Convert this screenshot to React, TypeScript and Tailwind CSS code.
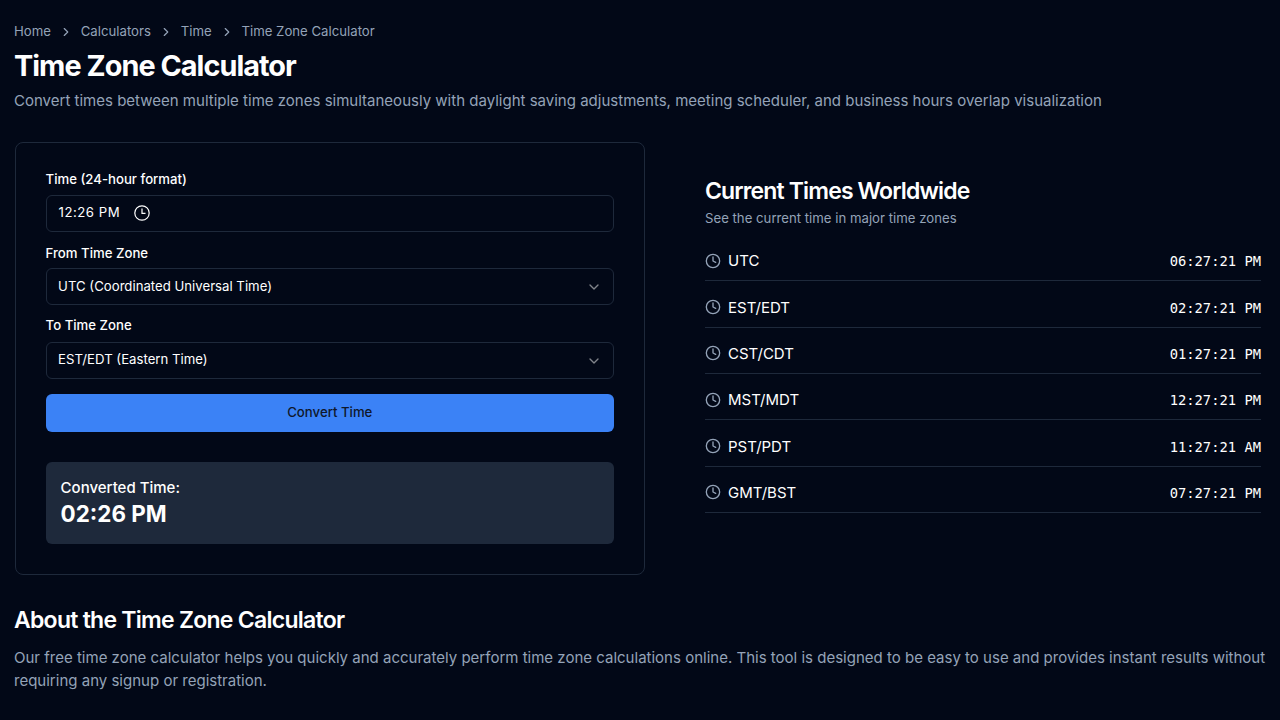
import { ChevronDown, ChevronRight, Clock } from 'lucide-react';

const zones = [
    { name: 'UTC', time: '06:27:21 PM' },
    { name: 'EST/EDT', time: '02:27:21 PM' },
    { name: 'CST/CDT', time: '01:27:21 PM' },
    { name: 'MST/MDT', time: '12:27:21 PM' },
    { name: 'PST/PDT', time: '11:27:21 AM' },
    { name: 'GMT/BST', time: '07:27:21 PM' },
];

function Crumb({ label, last }: { label: string; last?: boolean }) {
    return (
        <>
            <span>{label}</span>
            {!last && <ChevronRight className="w-3.5 h-3.5 mx-[7.9px] text-[#94a3b8]" />}
        </>
    );
}

function SelectBox({ label, value, gap, nudge }: { label: string; value: string; gap: string; nudge?: string }) {
    return (
        <div>
            <label className={`block text-[13.2px] leading-[20px] font-medium text-white ${gap}`}>{label}</label>
            <div className="h-[37px] flex items-center justify-between pl-[11.5px] pr-[11px] rounded-md border border-[#1e293b] text-[13.2px] text-white">
                <span className={nudge}>{value}</span>
                <ChevronDown className="w-4 h-4 text-white opacity-50" />
            </div>
        </div>
    );
}

export default function App() {
    return (
        <div className="bg-[#020817] text-white px-[14px] pt-[22px] font-['Inter',sans-serif] h-[720px] overflow-hidden">
            <nav className="flex items-center text-[13.2px] h-5 text-[#94a3b8]">
                <Crumb label="Home" />
                <Crumb label="Calculators" />
                <Crumb label="Time" />
                <Crumb label="Time Zone Calculator" last />
            </nav>
            <h1 className="text-[28.8px] leading-9 font-bold tracking-[-0.033em] mt-[6px]">Time Zone Calculator</h1>
            <p className="text-[#94a3b8] text-[15.02px] leading-6 mt-[5px]">
                Convert times between multiple time zones simultaneously with daylight saving adjustments, meeting scheduler, and business hours overlap visualization
            </p>

            <div className="flex mt-[29px]">
                <div className="w-[630px] ml-px shrink-0 h-[433px] rounded-lg border border-[#1e293b] pl-[29.6px] pr-[30px] py-[30px] flex flex-col">
                    <div>
                        <label className="block text-[13.2px] leading-[20px] font-medium mb-[6px] -mt-[4px]">Time (24-hour format)</label>
                        <div className="h-[37px] pb-px flex items-center pl-3 pr-3 rounded-md border border-[#1e293b] text-[13.2px]">
                            <span className="tracking-[0.5px]">12:26 PM</span>
                            <svg className="w-4 h-4 ml-[13.5px]" viewBox="0 0 16 16" fill="none" stroke="currentColor" strokeWidth="1.2">
                                <circle cx="8" cy="8" r="7.2" />
                                <path d="M8 3.5V8.4H11.5" />
                            </svg>
                        </div>
                    </div>
                    <div className="mt-[11px]"><SelectBox label="From Time Zone" value="UTC (Coordinated Universal Time)" gap="mb-[5px]" /></div>
                    <div className="mt-[10px]"><SelectBox label="To Time Zone" value="EST/EDT (Eastern Time)" gap="mb-[7px]" nudge="-mt-[2px]" /></div>
                    <button className="mt-[15px] h-[38px] shrink-0 rounded-md bg-[#3b82f6] text-[#0f172a] text-[13.2px] font-medium">Convert Time</button>
                    <div className="mt-[30px] h-[82px] shrink-0 rounded-md bg-[#1e293b] px-[15px] pt-[16px]">
                        <div className="text-[15px] leading-5 font-medium">Converted Time:</div>
                        <div className="text-[22.4px] leading-8 font-bold">02:26 PM</div>
                    </div>
                </div>

                <div className="flex-1 ml-[60px] mr-[5px] pt-[33px]">
                    <h2 className="text-[23px] leading-8 font-semibold tracking-[-0.037em]">Current Times Worldwide</h2>
                    <p className="text-[13.2px] leading-5 text-[#94a3b8] mt-[1px]">See the current time in major time zones</p>
                    <div className="mt-[7px]">
                        {zones.map((z) => (
                            <div key={z.name} className="h-[46.33px] pt-[8px] flex items-center justify-between border-b border-[#1e293b]">
                                <div className="flex items-center gap-[7px]">
                                    <Clock className="w-4 h-4 mb-[2px] text-[#94a3b8]" />
                                    <span className="text-[15px]">{z.name}</span>
                                </div>
                                <span className="font-['DejaVu_Sans_Mono',monospace] text-[13.8px]">{z.time}</span>
                            </div>
                        ))}
                    </div>
                </div>
            </div>

            <h2 className="text-[23px] leading-8 font-semibold tracking-[-0.032em] mt-[29px]">About the Time Zone Calculator</h2>
            <p className="text-[#94a3b8] text-[15.02px] leading-[23px] mt-[10px]">
                Our free time zone calculator helps you quickly and accurately perform time zone calculations online. This tool is designed to be easy to use and provides instant results without requiring any signup or registration.
            </p>
        </div>
    );
}
